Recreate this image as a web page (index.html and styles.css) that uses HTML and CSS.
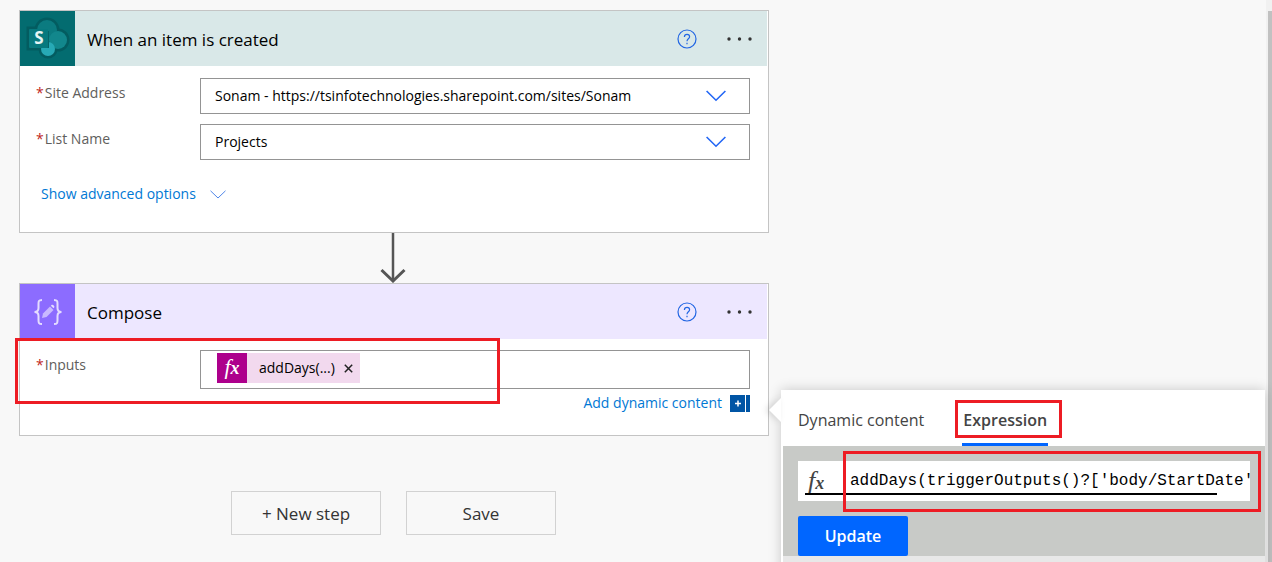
FILE: index.html
```html
<!DOCTYPE html>
<html lang="en">
<head>
    <meta charset="UTF-8">
    <meta name="viewport" content="width=device-width, initial-scale=1.0">
    <title>Edit your flow</title>
    <link rel="stylesheet" href="styles.css">
</head>
<body>

<main class="designer">

    <section class="card">
        <header class="card-header sharepoint">
            <div class="card-icon">
                <svg width="55" height="55" viewBox="0 0 55 55">
                    <g fill="#035c60" stroke="#035c60" stroke-width="5">
                        <circle cx="27" cy="19" r="10"/>
                        <circle cx="38" cy="29" r="9"/>
                        <circle cx="28" cy="38" r="7"/>
                        <rect x="9" y="18" width="19" height="19"/>
                    </g>
                    <circle cx="27" cy="19" r="10" fill="#0b7b80"/>
                    <circle cx="38" cy="29" r="9" fill="#12878c"/>
                    <circle cx="28" cy="38" r="7" fill="#27a9b5"/>
                    <path d="M19 20h10v17h-10z" fill="#056468"/>
                    <rect x="9" y="18" width="19" height="19" rx="1" fill="#07797e"/>
                    <text x="19" y="33" text-anchor="middle" class="logo-letter">S</text>
                </svg>
            </div>
            <h2 class="card-title">When an item is created</h2>
            <button class="icon-button" aria-label="Help">
                <svg width="20" height="20" viewBox="0 0 20 20" fill="none" stroke="#2266e3">
                    <circle cx="10" cy="10" r="9" stroke-width="1.2"/>
                    <path d="M7.4 8c0-1.7 1-2.700 2.600-2.700s2.600 1 2.600 2.400c0 2-2.600 2.200-2.600 4.500M10 13.800v1.400" stroke-width="1.2"/>
                </svg>
            </button>
            <button class="icon-button more" aria-label="More">
                <svg width="26" height="4" viewBox="0 0 26 4" fill="#333">
                    <circle cx="2" cy="2" r="1.7"/><circle cx="12.5" cy="2" r="1.7"/><circle cx="23" cy="2" r="1.7"/>
                </svg>
            </button>
        </header>
        <div class="card-body">
            <div class="field">
                <label for="site"><span class="required">*</span>Site Address</label>
                <div class="select">
                    <select id="site"><option>Sonam - https://tsinfotechnologies.sharepoint.com/sites/Sonam</option></select>
                    <svg width="20" height="12" viewBox="0 0 20 12" fill="none" stroke="#2266f5" stroke-width="1.6"><path d="M.6 1l9.4 9.2L19.4 1"/></svg>
                </div>
            </div>
            <div class="field">
                <label for="list"><span class="required">*</span>List Name</label>
                <div class="select">
                    <select id="list"><option>Projects</option></select>
                    <svg width="20" height="12" viewBox="0 0 20 12" fill="none" stroke="#2266f5" stroke-width="1.6"><path d="M.6 1l9.4 9.2L19.4 1"/></svg>
                </div>
            </div>
            <a class="advanced" href="#">Show advanced options
                <svg width="16" height="9" viewBox="0 0 16 9" fill="none" stroke="#4f86e8"><path d="M.5.8L8 8 15.5.8"/></svg>
            </a>
        </div>
    </section>

    <svg class="arrow" width="26" height="50" viewBox="0 0 26 50" fill="none" stroke="#555">
        <path d="M13 0v47" stroke-width="2.5"/>
        <path d="M1.5 37L13 48l11.5-11" stroke-width="3"/>
    </svg>

    <div class="step">
        <section class="card">
            <header class="card-header compose">
                <div class="card-icon">
                    <svg width="30" height="26" viewBox="0 0 30 26" fill="none" stroke="#e4dcff" stroke-width="2">
                        <path d="M9 1C5.500 1 5.500 2.500 5.500 5v4c0 2.500-1 4-4 4 3 0 4 1.500 4 4v4c0 2.500 0 4 3.500 4"/>
                        <path d="M21 1c3.500 0 3.500 1.500 3.500 4v4c0 2.500 1 4 4 4-3 0-4 1.500-4 4v4c0 2.500 0 4-3.500 4"/>
                        <path d="M9 19l1-4.500 7-7 3.500 3.500-7 7z" fill="#c9b9ff" stroke="none"/>
                        <path d="M17.800 6.700l1-.9c1-.8 3.200 1.400 2.500 2.400l-.8 1z" fill="#e4dcff" stroke="none"/>
                    </svg>
                </div>
                <h2 class="card-title">Compose</h2>
                <button class="icon-button" aria-label="Help">
                    <svg width="20" height="20" viewBox="0 0 20 20" fill="none" stroke="#2266e3">
                        <circle cx="10" cy="10" r="9" stroke-width="1.2"/>
                        <path d="M7.4 8c0-1.7 1-2.700 2.600-2.700s2.600 1 2.600 2.400c0 2-2.600 2.200-2.600 4.500M10 13.800v1.400" stroke-width="1.2"/>
                    </svg>
                </button>
                <button class="icon-button more" aria-label="More">
                    <svg width="26" height="4" viewBox="0 0 26 4" fill="#333">
                        <circle cx="2" cy="2" r="1.7"/><circle cx="12.5" cy="2" r="1.7"/><circle cx="23" cy="2" r="1.7"/>
                    </svg>
                </button>
            </header>
            <div class="card-body inputs">
                <div class="field">
                    <span class="label" id="inputs-label"><span class="required">*</span>Inputs</span>
                    <div class="token-box" role="group" aria-labelledby="inputs-label">
                        <span class="token">
                            <span class="fx">f<small>x</small></span>
                            <span class="token-name">addDays(...)</span>
                            <button class="remove" aria-label="Remove">
                                <svg width="9" height="9" viewBox="0 0 9 9" stroke="#222" stroke-width="1.5"><path d="M.8.8l7.400 7.400M8.200.8L.8 8.200"/></svg>
                            </button>
                        </span>
                    </div>
                </div>
                <a class="add-dynamic" href="#">Add dynamic content
                    <svg width="20" height="17" viewBox="0 0 20 17">
                        <path d="M0 0h15v17H0zM16 0h4v17h-4z" fill="#0055a5"/>
                        <path d="M8 5.500v6M5 8.500h6" stroke="#fff" stroke-width="1.5"/>
                    </svg>
                </a>
            </div>
            <div class="mark mark-inputs"></div>
        </section>

        <aside class="flyout">
            <nav class="tabs">
                <button class="tab">Dynamic content</button>
                <button class="tab active">Expression</button>
            </nav>
            <div class="expression">
                <div class="formula">
                    <label class="fx" for="formula">f<small>x</small></label>
                    <input id="formula" type="text" value="addDays(triggerOutputs()?['body/StartDate'">
                </div>
                <button class="update">Update</button>
                <div class="mark mark-formula"></div>
            </div>
        </aside>
    </div>

    <div class="actions">
        <button>+ New step</button>
        <button>Save</button>
    </div>

</main>

<div class="scrollbar"><div class="thumb"></div></div>

</body>
</html>
```
FILE: styles.css
```css
* {
    box-sizing: border-box;
}

body {
    margin: 0;
    display: flex;
    height: 100vh;
    overflow: hidden;
    background-color: #f8f8f8;
    font-family: "Open Sans", "Noto Sans", sans-serif;
    font-size: 14px;
    color: #000;
}

button,
input,
select {
    font: inherit;
    color: inherit;
    margin: 0;
    padding: 0;
    border: 0;
    background: none;
}

a {
    color: #0078d4;
    text-decoration: none;
}

svg {
    display: block;
    flex: none;
}

.designer {
    flex: 1;
    min-width: 0;
    padding: 10px 1px 0 19px;
}

/* cards */
.card {
    position: relative;
    max-width: 750px;
    background: #fff;
    border: 1px solid #c4c4c4;
}

.card-header {
    display: flex;
    align-items: center;
    height: 55px;
    margin-right: 1px;
    padding-right: 14px;
}

.sharepoint {
    background: #d9e8e8;
}

.compose {
    background: #ede7ff;
}

.card-icon {
    display: flex;
    align-items: center;
    justify-content: center;
    width: 55px;
    height: 55px;
}

.sharepoint .card-icon {
    background: #036c70;
}

.compose .card-icon {
    background: #8c6cff;
}

.logo-letter {
    font: bold 17px "Open Sans", sans-serif;
    fill: #e6f4f4;
}

.card-title {
    flex: 1;
    margin: 0 0 0 12px;
    font-size: 17px;
    font-weight: 400;
    padding-top: 2px;
}

.more {
    margin-left: 30px;
}

.card-body {
    padding: 12px 18px 0 16px;
    height: 166px;
}

.card-body.inputs {
    height: 96px;
    padding-top: 11px;
}

.field {
    display: grid;
    grid-template-columns: 164px 1fr;
    margin-bottom: 10px;
}

.field label,
.label {
    padding-top: 5px;
    line-height: 20px;
    color: #605e5c;
}

.required {
    color: #c0281c;
    margin-right: 1px;
}

.select {
    display: grid;
    align-items: center;
    height: 36px;
    border: 1px solid #949494;
}

.select select {
    grid-area: 1 / 1;
    width: 100%;
    height: 34px;
    padding: 0 0 2px 14px;
    appearance: none;
}

.select svg {
    grid-area: 1 / 1;
    justify-self: end;
    margin-right: 23px;
    pointer-events: none;
}

.advanced {
    display: flex;
    align-items: center;
    gap: 14px;
    margin: 24px 0 0 5px;
    line-height: 20px;
}

.arrow {
    margin-left: 361px;
}

/* token input */
.token-box {
    height: 39px;
    padding: 2px 16px;
    border: 1px solid #949494;
}

.token {
    display: inline-flex;
    align-items: center;
    height: 30px;
    background: #f2d9ee;
}

.fx {
    font: italic 22px "Liberation Serif", serif;
}

.fx small {
    font-size: 18px;
    font-weight: 700;
}

.token .fx {
    width: 30px;
    height: 30px;
    line-height: 28px;
    text-align: center;
    background: #ad008c;
    color: #fff;
}

.token-name {
    margin: 0 9px 0 12px;
    line-height: 20px;
}

.remove {
    margin-right: 7px;
}

.field:has(.token-box) {
    margin-bottom: 4px;
}

.add-dynamic {
    display: flex;
    align-items: center;
    justify-content: flex-end;
    gap: 8px;
    line-height: 20px;
}

/* flyout next to the compose card */
.step {
    position: relative;
}

.flyout {
    position: absolute;
    top: 107px;
    left: 762px;
    right: 0;
    height: 190px;
    background: #fff;
    box-shadow: 0 0 12px rgba(0, 0, 0, 0.2);
}

.flyout::before {
    content: "";
    position: absolute;
    left: -12px;
    top: 8px;
    border: 12px solid transparent;
    border-left-width: 0;
    border-right-color: #fff;
    filter: drop-shadow(-3px 0 3px rgba(0, 0, 0, 0.15));
}

.tabs {
    display: flex;
    gap: 38px;
    height: 56px;
    padding-left: 17px;
}

.tab {
    position: relative;
    padding-top: 4px;
    font-size: 16px;
    color: #444;
}

.tab.active {
    padding: 7px 1px 0;
    border-bottom: 3px solid #0066ff;
    font-weight: 600;
}

.tab.active::after {
    content: "";
    position: absolute;
    inset: 10px -14px 5px -7px;
    border: 3px solid #ed1c24;
}

.expression {
    position: relative;
    margin-left: 2px;
    padding: 15px 15px 0;
    height: 110px;
    background: #c8cac7;
    box-shadow: 0 20px #e8e8e8;
}

.formula {
    position: relative;
    display: flex;
    align-items: center;
    height: 40px;
    margin-bottom: 15px;
    padding-left: 10px;
    background: #fff;
}

.formula::after {
    content: "";
    position: absolute;
    left: 7px;
    right: 33px;
    bottom: 6px;
    height: 2px;
    background: #000;
}

.formula .fx {
    width: 42px;
    font-size: 26px;
    color: #444;
}

.formula input {
    flex: 1;
    min-width: 0;
    height: 38px;
    font-family: "Liberation Mono", monospace;
    font-size: 16px;
    outline: 0;
}

.update {
    display: block;
    width: 110px;
    height: 40px;
    border-radius: 2px;
    background: #0066ff;
    color: #fff;
    font-size: 16px;
    font-weight: 600;
}

/* red highlight boxes */
.mark {
    position: absolute;
    border: 3px solid #ed1c24;
    pointer-events: none;
}

.mark-inputs {
    top: 54px;
    left: -5px;
    width: 485px;
    height: 66px;
}

.mark-formula {
    inset: 5px 4px 44px 60px;
}

/* bottom buttons */
.actions {
    display: flex;
    justify-content: center;
    gap: 25px;
    max-width: 749px;
    margin-top: 55px;
}

.actions button {
    width: 150px;
    height: 44px;
    border: 1px solid #d2d2d2;
    font-size: 17px;
    color: #333;
}

.scrollbar {
    width: 6px;
    padding: 11px 0 0 2px;
    background: #f1f1f1;
}

.thumb {
    height: 100%;
    background: #c1c1c1;
}
```
